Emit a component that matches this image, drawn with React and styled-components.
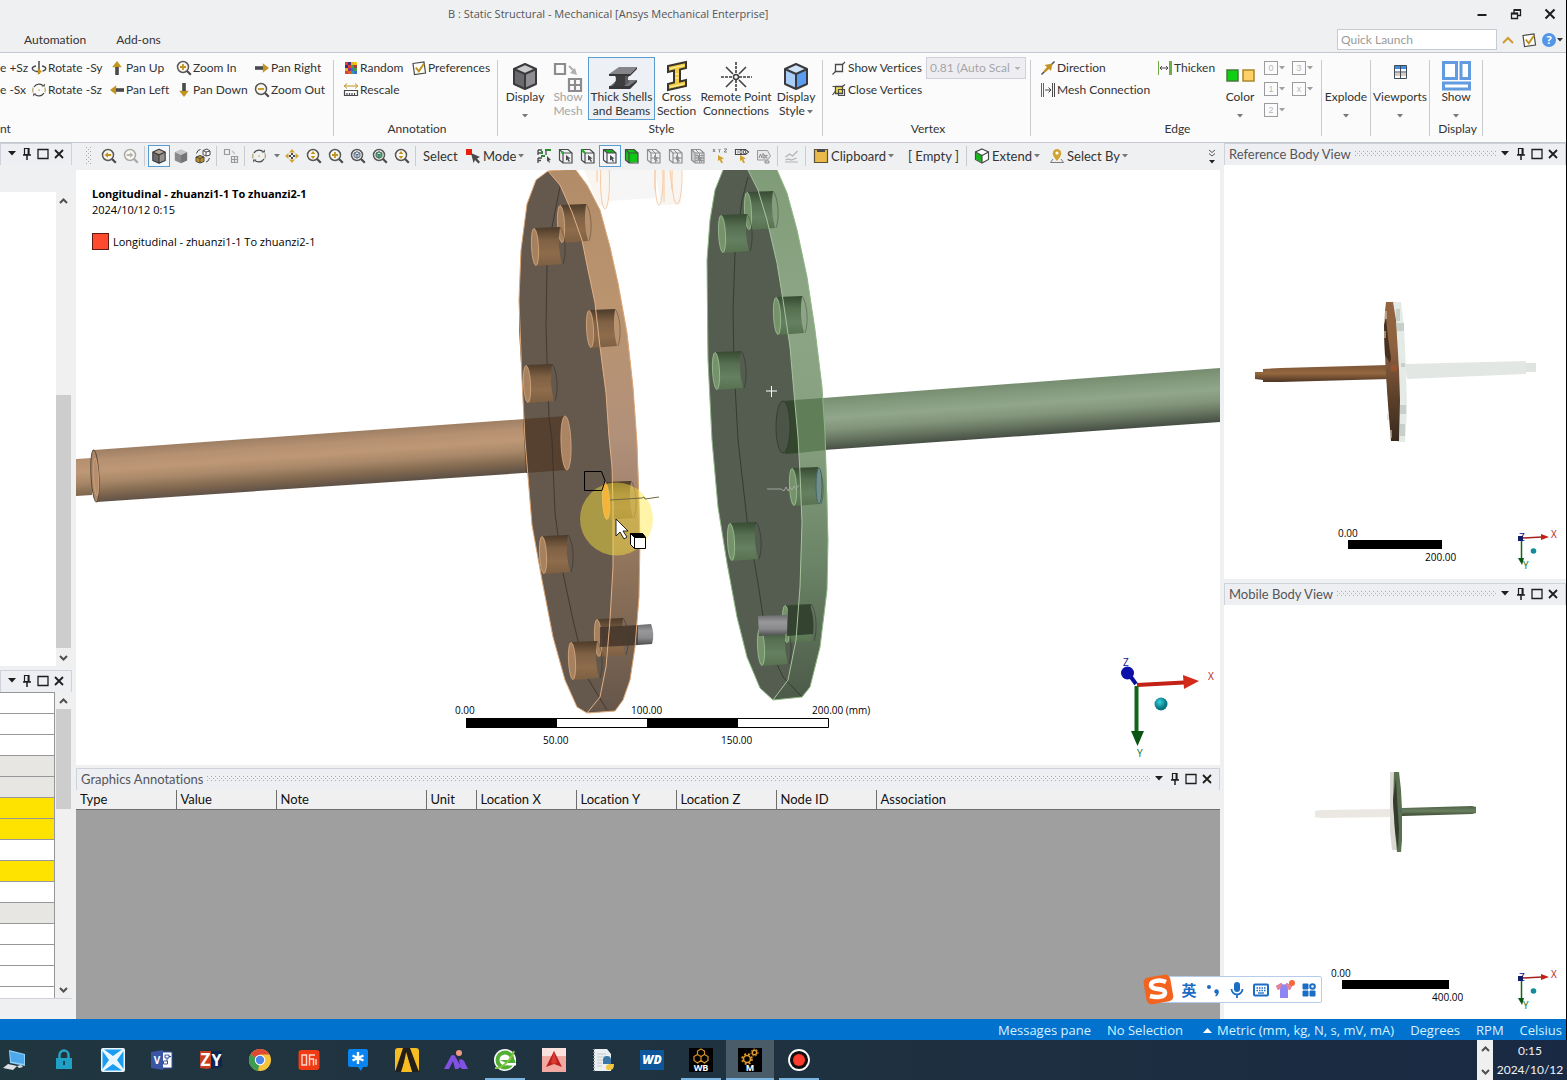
import React from "react";
import styled, { createGlobalStyle } from "styled-components";

const GlobalStyle = createGlobalStyle`
  * {
    box-sizing: border-box;
  }

  body {
    margin: 0;
    background: #eff0f2;
    color: #333;
    font: 12px/14px Lato, "Open Sans", "Noto Sans CJK SC", sans-serif;
    font-variant-ligatures: none;
  }

  button {
    margin: 0;
    padding: 0;
    border: 0;
    background: none;
    color: inherit;
    font: inherit;
    font-variant-ligatures: none;
    white-space: nowrap;
  }

  svg {
    display: block;
    flex: none;
  }
`;

/* ---------- icons ---------- */

const Icon = ({ size = 16, children, box = 16, drop = 0 }) => (
  <svg width={size} height={size} viewBox={`0 ${-drop} ${box} ${box}`} fill="none" overflow="visible" aria-hidden="true">
    {children}
  </svg>
);

const Caret = ({ color = "#777" }) => (
  <svg width="6" height="4" viewBox="0 0 6 4" aria-hidden="true">
    <path d="M0 0h6L3 3.6z" fill={color} />
  </svg>
);

const Chevron = ({ up, color = "#505050" }) => (
  <svg width="9" height="6" viewBox="0 0 9 6" fill="none" aria-hidden="true">
    <path d={up ? "M1 5l3.500-3.500L8 5" : "M1 1l3.500 3.500L8 1"} stroke={color} strokeWidth="2" />
  </svg>
);

const Magnifier = ({ sign, dim }) => (
  <Icon>
    <circle cx="7" cy="7" r="5.500" fill="#fbf7ec" stroke={dim ? "#a9a9a9" : "#58585a"} strokeWidth="1.500" />
    <path d="M11 11l3.800 3.800" stroke={dim ? "#a9a9a9" : "#4a4a4c"} strokeWidth="2.200" />
    {sign === "plus" && <path d="M7 4v6M4 7h6" stroke="#c2941f" strokeWidth="1.800" />}
    {sign === "minus" && <path d="M4 7h6" stroke="#c2941f" strokeWidth="1.800" />}
    {sign === "left" && <path d="M3.500 7L7 4.300v1.700h3.200v2H7v1.700z" fill="#c2941f" />}
    {sign === "right" && <path d="M10.500 7L7 4.300v1.700H3.800v2H7v1.700z" fill="#b5b5b5" />}
    {sign === "updown" && <path d="M7 3l2.300 3H4.700zM7 11l2.300-3H4.700z" fill="#c2941f" />}
    {sign === "cube" && <path d="M7 3.600l3 1.500v3.600l-3 1.600-3-1.600V5.100zM4 5.100l3 1.600 3-1.600M7 6.700v3.500" stroke="#5b6b85" fill="#b9c6da" />}
    {sign === "green" && <path d="M7 3.600l3 1.500v3.600l-3 1.600-3-1.600V5.100zM4 5.100l3 1.600 3-1.600M7 6.700v3.500" stroke="#3f6b55" fill="#58b58a" />}
  </Icon>
);

const Arrow = ({ turn }) => (
  <Icon>
    <g transform={`rotate(${turn} 8 8)`}>
      <path d="M8 1l4.800 6.200H3.200z" fill="#c2941f" />
      <path d="M6.200 7h3.600v8H6.200z" fill="#4a4a4c" />
    </g>
  </Icon>
);

const Cube = ({ size = 32, top, left, right, stroke = "#3a3a3c" }) => (
  <Icon size={size} box={32} drop={size === 32 ? 2 : 0}>
    <path d="M16 4l11 5-11 5L5 9z" fill={top} />
    <path d="M5 9l11 5v15L5 24z" fill={left} />
    <path d="M27 9l-11 5v15l11-5z" fill={right} />
    <path d="M16 4l11 5v15l-11 5-11-5V9zM5 9l11 5 11-5M16 14v15" stroke={stroke} strokeWidth={stroke === "none" ? 0 : 2} strokeLinejoin="round" />
  </Icon>
);

const PickCube = ({ face, line = "#4a4a4c", mesh }) => (
  <Icon>
    {face === "body" && <path d="M2 2l8-1 4 4v9l-9 1-3-3z" fill="#0fc814" />}
    {face === "top" && <path d="M1.500 1.500h8.500l4 3.500H5z" fill="#14b41a" />}
    <path d="M1.500 1.500H10l4 3.500v10H5l-3.500-3zM1.500 1.500L5 5h9M5 5v10" stroke={line} strokeWidth="1.200" />
    {face === "edge" && <path d="M1.500 1.500L5 5" stroke="#14b41a" strokeWidth="2" />}
    {face === "point" && <path d="M3.500 3.500h2.500v2.500H3.500z" fill="#14b41a" />}
    {mesh > 0 && <path d="M9.500 5v10M5 10h9M5.500 1.500L9 5" stroke={line} />}
    {mesh > 1 && <path d="M7 5v10M12 5v10M5 7.500h9M5 12.500h9M3 3v10" stroke={line} strokeWidth=".8" />}
    {face !== "body" && <path d="M8 7l4.500 3.500-2 .3 1.500 2.500-1.200.7-1.400-2.600L8 12.500z" fill={line} />}
  </Icon>
);

const Orbit = () => (
  <Icon>
    <path d="M3 5a5.800 5.800 0 0 1 9.500-.8M13 11a5.800 5.800 0 0 1-9.500.8" stroke="#4a4a4c" strokeWidth="1.300" />
    <path d="M2.200 10.500a6 6 0 0 1 0-5M13.800 5.500a6 6 0 0 1 0 5" stroke="#b8a878" strokeWidth="1.300" />
    <path d="M10.500 4.500h3.500V1.500zM5.500 11.500H2v3z" fill="#6d6858" />
    <path d="M7.400 7.400h1.300v1.300H7.400z" fill="#c2941f" />
  </Icon>
);

const RotateY = () => (
  <Icon>
    <path d="M8 1v13" stroke="#4a4a4c" strokeWidth="1.500" />
    <path d="M5 6C0 7 0 10 5 11.500h2M11 6c5 1 5 4 .5 5.200" stroke="#4a4a4c" strokeWidth="1.300" />
    <path d="M11 11.500L6.800 8v7z" fill="#c2941f" />
  </Icon>
);

const CheckNote = () => (
  <Icon>
    <path d="M2 3.500L13 2l1.500 11L3.500 14.500z" fill="#fff" stroke="#4a4a4c" strokeWidth="1.200" />
    <path d="M4.800 7.500l3 3.800L13 3.500" stroke="#c2941f" strokeWidth="2" />
  </Icon>
);

const gridColors = ["#e0422c", "#4a2f7c", "#e8b21e", "#f5c518", "#3a2a86", "#e0422c", "#41a048", "#a43b32", "#e8b21e", "#8c2d8c", "#3670c8", "#41a048", "#e0422c", "#d8632a", "#2f9ba3", "#3670c8"];

const ColorGrid = () => (
  <Icon>
    {gridColors.map((c, i) => (
      <rect key={i} x={2 + (i % 4) * 3} y={2 + Math.floor(i / 4) * 3} width="3" height="3" fill={c} />
    ))}
  </Icon>
);

const RescaleIcon = () => (
  <Icon>
    <path d="M1 4h14M4 1.500L1.200 4 4 6.500M12 1.500L14.800 4 12 6.500" stroke="#c2941f" />
    <path d="M1.500 8.500h13v5h-13zM4 13v-2M6.500 13v-2M9 13v-2M11.500 13v-2" stroke="#4a4a4c" strokeWidth="1.200" />
  </Icon>
);

const ShowMeshIcon = () => (
  <Icon size={32} box={32} drop={2}>
    <path d="M3 4h10v10H3z" stroke="#8c8c8e" strokeWidth="2.200" />
    <path d="M17 6l5 5" stroke="#b0b0b0" strokeWidth="2" />
    <path d="M25 15l-7-2 5-5z" fill="#b0b0b0" />
    <path d="M17 19h12v12H17zM23 19v12M17 25h12" stroke="#8c8c8e" strokeWidth="2.200" />
  </Icon>
);

const BeamIcon = () => (
  <Icon size={32} box={32}>
    <path d="M11 22h20l-8 7H3z" fill="#77777c" />
    <path d="M9 17h15q-4 3-1 7l-5 4H6q6-4 3-11z" fill="#3d3d40" />
    <path d="M19 17h5q-4 3-1 7l-4 3z" fill="#5a5a5f" />
    <path d="M13 9h18l-7 7H3z" fill="#85858a" />
    <path d="M3 16h21l7-7v2l-7 7H3zM3 28h20l8-6v2l-7 7H3z" fill="#38383b" />
  </Icon>
);

const SectionIcon = () => (
  <Icon size={32} box={32}>
    <path d="M7 8l18-4v6l-6 1.500v12L25 22v6L7 32v-6l6-1.500v-12L7 14z" fill="#f2cd41" stroke="#38352c" strokeWidth="2" />
    <path d="M9 10.500l14-3M9 29l14-3M14 16h4M14 20h4" stroke="#fff2b4" strokeWidth="1" />
  </Icon>
);

const RemoteIcon = () => (
  <Icon size={32} box={32} drop={2}>
    <circle cx="16" cy="17" r="2.500" stroke="#3f3f41" strokeWidth="1.500" />
    <path d="M16 2v12M16 20v12M1 17h12M19 17h13" stroke="#3f3f41" strokeWidth="1.600" strokeDasharray="3 1" />
    <path d="M6 7l7 7M26 7l-7 7M6 27l7-7M26 27l-7-7" stroke="#3f3f41" strokeWidth="1.500" />
  </Icon>
);

const VertexIcon = ({ fill = "none" }) => (
  <Icon>
    <path d="M4.500 4.500h7v7h-7z" fill={fill} stroke="#4a4a4c" strokeWidth="1.300" />
    {fill === "none" ? (
      <path d="M1.500 14.500l3-3M11.500 4.500l2.500-2.500" stroke="#4a4a4c" strokeWidth="1.200" />
    ) : (
      <path d="M7.500 7.500h6v6h-6zM1.500 4.500h3M1.500 13l3-4M11.500 4.500L14 2.500" stroke="#4a4a4c" strokeWidth="1.200" />
    )}
  </Icon>
);

const DirectionIcon = () => (
  <Icon>
    <path d="M1.500 14.500l13-13" stroke="#4a4a4c" strokeWidth="1.500" />
    <path d="M12.500 3.500L11 11 9 9l-4 3.500-1.500-1.500L7 7 4.500 5z" fill="#c2941f" />
  </Icon>
);

const ConnectionIcon = () => (
  <Icon>
    <path d="M1.500 1v14M3.500 1v14" stroke="#d0382c" />
    <path d="M12.500 1v14M14.500 1v14M5 8h6M8.500 5.500L11 8l-2.500 2.500" stroke="#4a4a4c" />
  </Icon>
);

const ThickenIcon = () => (
  <Icon>
    <path d="M1.500 1v14" stroke="#6fae45" />
    <path d="M13.500 1v14" stroke="#6fae45" strokeWidth="3" />
    <path d="M3 8h8M5 6L3 8l2 2M9 6l2 2-2 2" stroke="#4a4a4c" />
  </Icon>
);

const SwatchIcon = () => (
  <Icon size={32} box={32}>
    <path d="M3 12h11v11H3z" fill="#0fcf14" stroke="#4a7a3c" strokeWidth="1.500" />
    <path d="M19 12h11v11H19z" fill="#fdd163" stroke="#a8862c" strokeWidth="1.500" />
  </Icon>
);

const ViewportIcon = () => (
  <Icon size={32} box={32}>
    <path d="M10 8h12v3H10z" fill="#3e8fe0" />
    <path d="M10 15h12v3H10z" fill="#d8cdbb" />
    <path d="M10.500 7.500h12v13h-12zM16.500 7v13M10 14h13" stroke="#3f4a58" />
  </Icon>
);

const ShowIcon = () => (
  <Icon size={32} box={32} drop={1}>
    <path d="M3.500 3.500h13v16h-13zM21 3.500h8.500v16H21zM3.500 24h26v6h-26z" fill="#fff" stroke="#639be0" strokeWidth="3" />
  </Icon>
);

const SwapCubes = () => (
  <Icon>
    <path d="M8 2.500L12 1l3 2v4l-4 1-3-1.500z" fill="#fff" stroke="#4a4a4c" />
    <path d="M8 2.500l3 1.500 4-1M11 4v4" stroke="#4a4a4c" />
    <path d="M1 9l4-1.500L9 9v4.500L5 15l-4-1.500z" fill="#c2941f" stroke="#4a4a4c" />
    <path d="M1 9l4 1.500L9 9M5 10.500V15M1.500 5.500L3 2.500l2.500-1M14.500 10L13 13l-2 1" stroke="#4a4a4c" />
  </Icon>
);

const ShowMeshSmall = () => (
  <Icon>
    <path d="M1.500 1.500h5v5h-5zM8.500 8.500h6v6h-6zM11.500 8.500v6M8.500 11.500h6" stroke="#9a9a9c" strokeWidth="1.200" />
    <path d="M9 3l3 3" stroke="#c2c2c2" strokeWidth="1.200" />
  </Icon>
);

const PanIcon = () => (
  <Icon>
    <path d="M8 1l3 3.500H5zM8 15l3-3.500H5zM1 8l3.500-3v6zM15 8l-3.500-3v6z" fill="#d1a330" />
    <path d="M7 5h2v2H7zM7 9h2v2H7zM5 7h2v2H5zM9 7h2v2H9z" fill="#4a4a4c" />
  </Icon>
);

const ModeIcon = () => (
  <Icon>
    <path d="M1 1h6v6H1z" fill="#e5200d" />
    <path d="M6 5l9 4-3 1.500L15 14l-1.500 1.500L10 12l-1.500 3z" fill="#4a4a4c" />
  </Icon>
);

const FiltersIcon = () => (
  <Icon>
    <path d="M2 2v5M2 2h4M2 5h3M2 10v5M2 10h4M2 12.500h3M10 2v5" stroke="#4a4a4c" strokeWidth="1.300" />
    <path d="M9 1h6v2H9zM5 7h4v2H5zM5 3h2v3H5z" fill="#2b8a30" />
    <path d="M11 8l4 4-2 .2 1 2-1 .5-1-2-1 1z" fill="#4a4a4c" />
  </Icon>
);

const Cursor = () => <path d="M6 7l6 3.500-2.500.8L11 15H9l-1.200-3L6 13z" fill="#d1a330" />;

const XyzIcon = () => (
  <Icon>
    <path d="M1 1l2 3M3 1L1 4M6.500 1l1 1.500v2M8.500 1l-1 1.500M12 1h3l-3 3h3" stroke="#7a7a7c" strokeWidth=".9" />
    <Cursor />
  </Icon>
);

const TagIcon = () => (
  <Icon>
    <path d="M1.500 1.500h10l3 2.500-3 2.500h-10z" fill="#fff" stroke="#4a4a4c" strokeWidth="1.200" />
    <path d="M4 2.500v3M6 2.500h2v3H6zM9.500 2.500h2v3h-2z" stroke="#4a4a4c" strokeWidth=".8" />
    <Cursor />
  </Icon>
);

const AbcIcon = () => (
  <Icon>
    <path d="M1.500 2.500h10l3 5.500-3 4h-10z" fill="#e8e8ea" stroke="#9a9a9c" />
    <path d="M3 10l1.500-4L6 10M7 5v5h2V7H7M11.500 7.500H10V10h1.500M9 13h4v2H9z" stroke="#8a8a8c" />
  </Icon>
);

const ChartIcon = () => (
  <Icon>
    <path d="M1.500 9l4-3 3 2 5-5M1 14h13M1.500 12l3-1 3 1 5-2" stroke="#b2b2b4" strokeWidth="1.200" />
  </Icon>
);

const ClipboardIcon = () => (
  <Icon>
    <path d="M1.500 1.500h13v13h-13z" fill="#e9b94a" stroke="#5c5138" strokeWidth="1.200" />
    <path d="M4 1h8v3H4z" fill="#4a4a4c" />
  </Icon>
);

const ExtendIcon = () => (
  <Icon>
    <path d="M8 1l6.500 3v7.500L8 15l-6.500-3.500V4z" fill="#fff" stroke="#4a4a4c" strokeWidth="1.200" />
    <path d="M2 4.800l6 3v6.700l-6-3.200z" fill="#14b41a" />
    <path d="M1.500 4L8 7.500 14.500 4M8 7.500V15" stroke="#4a4a4c" strokeWidth="1.200" />
  </Icon>
);

const PlaceIcon = () => (
  <Icon>
    <path d="M8 13C5 9 3.800 7.400 3.800 5.200a4.200 4.200 0 0 1 8.400 0C12.200 7.400 11 9 8 13z" fill="#d1a330" />
    <circle cx="8" cy="5" r="1.600" fill="#fff" />
    <path d="M4 11l-2.500 3.500h13L12 11" stroke="#7a7a7c" />
  </Icon>
);

const PinIcon = () => (
  <Icon>
    <path d="M5.500 2.500h4.500v6H5.500z" stroke="#1e1e1e" strokeWidth="1.200" />
    <path d="M9.300 2v7M4 9h8M8 9v5" stroke="#1e1e1e" strokeWidth="1.500" />
  </Icon>
);

const SquareIcon = () => (
  <Icon>
    <path d="M3 3.500h10v9H3z" stroke="#1e1e1e" strokeWidth="1.300" />
  </Icon>
);

const CrossIcon = () => (
  <Icon>
    <path d="M4 4l8 8M12 4l-8 8" stroke="#1e1e1e" strokeWidth="1.800" />
  </Icon>
);

/* ---------- window frame ---------- */

const Window = styled.div`
  display: flex;
  flex-direction: column;
  min-height: 100vh;
`;

const AppFrame = styled.div`
  flex: 1;
  display: flex;
  flex-direction: column;
  border-right: 1px solid #000;
`;

const TitleBar = styled.header`
  display: flex;
  align-items: center;
  height: 28px;
  padding: 0 8px 0 448px;
  color: #555;
`;

const Title = styled.h1`
  flex: 1;
  margin: 0;
  font-family: "Open Sans", sans-serif;
  font-size: 11px;
  font-weight: 400;
`;

const WindowButton = styled.button`
  display: flex;
  justify-content: center;
  width: 34px;

  &:last-child {
    width: 16px;
    margin-left: 9px;
  }
`;

const TabRow = styled.nav`
  display: flex;
  align-items: center;
  height: 25px;
  padding: 0 3px 1px 9px;
  border-bottom: 1px solid #c4c7cd;
`;

const Tab = styled.button`
  padding: 0 15px;
`;

const TabSpacer = styled.div`
  flex: 1;
`;

const QuickLaunch = styled.input`
  width: 160px;
  height: 21px;
  padding: 0 3px;
  border: 1px solid #c6cad2;
  background: #fff;
  font: inherit;

  &::placeholder {
    color: #9a9a9a;
  }
`;

const TinyButton = styled.button`
  display: flex;
  align-items: center;
  justify-content: center;
  min-width: 21px;

  &:last-child {
    justify-content: flex-end;
    min-width: 24px;
  }
`;

/* ---------- ribbon ---------- */

const RibbonBar = styled.div`
  display: flex;
  height: 90px;
  padding-top: 4px;
  border-bottom: 1px solid #c4c7cd;
  background: #fbfbfc;
`;

const Group = styled.section`
  display: flex;
  flex-direction: column;
  flex: none;
  width: ${(props) => props.$width}px;
`;

const GroupBody = styled.div`
  flex: 1;
  display: flex;
  align-items: flex-start;
  justify-content: ${(props) => (props.$center ? "center" : "flex-start")};
  padding-left: ${(props) => props.$pad || 0}px;
`;

const GroupLabel = styled.div`
  height: 20px;
  padding-left: ${(props) => (props.$align ? 0 : 3)}px;
  text-align: ${(props) => props.$align || "center"};
`;

const Divider = styled.div`
  width: 1px;
  margin: 3px 0 6px;
  background: #c9cbd0;
`;

const Stack = styled.div`
  display: flex;
  flex-direction: column;
  align-items: flex-start;
  flex: none;
  width: ${(props) => props.$width}px;
`;

const SmallButton = styled.button`
  display: flex;
  align-items: center;
  gap: 1px;
  height: 22px;
`;

const LargeButton = styled.button`
  display: flex;
  flex-direction: column;
  align-items: center;
  flex: none;
  width: ${(props) => props.$width}px;
  height: 63px;
  border: 1px solid ${(props) => (props.$active ? "#5a9bd0" : "transparent")};
  background: ${(props) => (props.$active ? "#edf0f5" : "none")};
  color: ${(props) => (props.disabled ? "#a5a5a5" : "inherit")};

  > svg:last-child {
    margin-top: 10px;
  }
`;

const InlineCaret = styled.span`
  display: inline-block;
  margin-left: 2px;
  vertical-align: middle;
`;

const ScaleSelect = styled.select`
  appearance: none;
  width: 100px;
  height: 22px;
  padding: 0 3px;
  border: 1px solid #cfd1da;
  border-radius: 0;
  background:
    linear-gradient(45deg, transparent 50%, #b4b4b8 50%) no-repeat right 8px top 9px / 3px 3px,
    linear-gradient(-45deg, transparent 50%, #b4b4b8 50%) no-repeat right 5px top 9px / 3px 3px,
    #eeeef2;
  color: #a5a5a8;
  font: inherit;
  opacity: 1;
`;

const EdgeGrid = styled.div`
  display: grid;
  grid-template-columns: 28px 28px;
  grid-auto-rows: 21px;
  align-items: center;
  padding-left: 3px;
`;

const EdgeButton = styled.button`
  display: flex;
  align-items: center;
  gap: 1px;
  grid-column: ${(props) => props.$col};
  grid-row: ${(props) => props.$row};
`;

const EdgeDigit = styled.span`
  width: 14px;
  height: 14px;
  border: 1px solid #9c9c9e;
  color: #b8b8b8;
  font: 9px/12px "Liberation Sans", sans-serif;
  text-align: center;
`;

const Large = ({ icon, lines, width, active, disabled, caret, menu }) => (
  <LargeButton $width={width} $active={active} disabled={disabled}>
    {icon}
    {lines.map((line, i) => (
      <span key={line}>
        {line}
        {caret && i === lines.length - 1 && (
          <InlineCaret>
            <Caret />
          </InlineCaret>
        )}
      </span>
    ))}
    {menu && <Caret />}
  </LargeButton>
);

const RibbonGroup = ({ width, pad, label, center, align, children }) => (
  <>
    <Group $width={width}>
      <GroupBody $pad={pad} $center={center}>
        {children}
      </GroupBody>
      <GroupLabel $align={align}>{label}</GroupLabel>
    </Group>
    <Divider />
  </>
);

const Column = ({ width, items }) => (
  <Stack $width={width}>
    {items.map(([icon, label]) => (
      <SmallButton key={label}>
        {icon}
        {label}
      </SmallButton>
    ))}
  </Stack>
);

const edgeItems = [
  ["0", 1, 1],
  ["3", 2, 1],
  ["1", 1, 2],
  ["x", 2, 2],
  ["2", 1, 3],
];

const Ribbon = () => (
  <RibbonBar>
    <RibbonGroup width={333} label="nt" align="left">
      <Column width={31} items={[[null, "e +Sz"], [null, "e -Sx"]]} />
      <Column width={78} items={[[<RotateY />, "Rotate -Sy"], [<Orbit />, "Rotate -Sz"]]} />
      <Column width={67} items={[[<Arrow turn={0} />, "Pan Up"], [<Arrow turn={-90} />, "Pan Left"]]} />
      <Column width={78} items={[[<Magnifier sign="plus" />, "Zoom In"], [<Arrow turn={180} />, "Pan Down"]]} />
      <Column width={78} items={[[<Arrow turn={90} />, "Pan Right"], [<Magnifier sign="minus" />, "Zoom Out"]]} />
    </RibbonGroup>
    <RibbonGroup width={163} pad={9} label="Annotation">
      <Column width={68} items={[[<ColorGrid />, "Random"], [<RescaleIcon />, "Rescale"]]} />
      <Column width={84} items={[[<CheckNote />, "Preferences"]]} />
    </RibbonGroup>
    <RibbonGroup width={324} pad={4} label="Style">
      <Large width={46} icon={<Cube top="#c9c9cb" left="#6a6a6e" right="#8f8f93" />} lines={["Display"]} menu />
      <Large width={40} icon={<ShowMeshIcon />} lines={["Show", "Mesh"]} disabled />
      <Large width={67} icon={<BeamIcon />} lines={["Thick Shells", "and Beams"]} active />
      <Large width={43} icon={<SectionIcon />} lines={["Cross", "Section"]} />
      <Large width={76} icon={<RemoteIcon />} lines={["Remote Point", "Connections"]} />
      <Large width={44} icon={<Cube top="#cfe3fb" left="#a9cdf8" right="#5b9df0" />} lines={["Display", "Style"]} caret />
    </RibbonGroup>
    <RibbonGroup width={207} pad={8} label="Vertex">
      <Column width={95} items={[[<VertexIcon />, "Show Vertices"], [<VertexIcon fill="#f4e04a" />, "Close Vertices"]]} />
      <ScaleSelect disabled aria-label="Vertex scale">
        <option>0.81 (Auto Scal</option>
      </ScaleSelect>
    </RibbonGroup>
    <RibbonGroup width={290} pad={9} label="Edge">
      <Column width={117} items={[[<DirectionIcon />, "Direction"], [<ConnectionIcon />, "Mesh Connection"]]} />
      <Column width={62} items={[[<ThickenIcon />, "Thicken"]]} />
      <Large width={42} icon={<SwatchIcon />} lines={["Color"]} menu />
      <EdgeGrid>
        {edgeItems.map(([digit, col, row]) => (
          <EdgeButton key={digit} $col={col} $row={row}>
            <EdgeDigit>{digit}</EdgeDigit>
            <Caret color="#a0a0a2" />
          </EdgeButton>
        ))}
      </EdgeGrid>
    </RibbonGroup>
    <RibbonGroup width={48} center>
      <Large width={46} icon={<Icon size={32} />} lines={["Explode"]} menu />
    </RibbonGroup>
    <RibbonGroup width={58} center>
      <Large width={56} icon={<ViewportIcon />} lines={["Viewports"]} menu />
    </RibbonGroup>
    <RibbonGroup width={52} center label="Display">
      <Large width={44} icon={<ShowIcon />} lines={["Show"]} menu />
    </RibbonGroup>
  </RibbonBar>
);

/* ---------- graphics toolbar ---------- */

const ToolStrip = styled.div`
  display: flex;
  align-items: center;
  flex: none;
  height: 27px;
  padding: 0 0 1px 10px;
  font-size: 13px;
`;

const Grip = styled.div`
  width: 6px;
  height: 18px;
  margin-right: 6px;
  background:
    conic-gradient(at 1px 1px, transparent 75%, #a5a8ae 0) 0 0 / 4px 4px,
    conic-gradient(at 1px 1px, transparent 75%, #a5a8ae 0) 2px 2px / 4px 4px;
`;

const ToolButton = styled.button`
  display: flex;
  align-items: center;
  justify-content: center;
  flex: none;
  width: 22px;
  height: 22px;
  border: 1px solid ${(props) => (props.$active ? "#5a9bd0" : "transparent")};
  background: ${(props) => (props.$active ? "#f4f8fd" : "none")};
`;

const ToolSeparator = styled.div`
  flex: none;
  width: 1px;
  height: 20px;
  margin: 0 3px 0 2px;
  background: #c9cbd0;
`;

const MenuButton = styled.button`
  display: flex;
  align-items: center;
  gap: 2px;
  flex: none;
  width: ${(props) => props.$width}px;
  padding-left: 4px;
`;

const Overflow = styled.button`
  display: flex;
  flex-direction: column;
  align-items: center;
  gap: 3px;
  margin-left: auto;
  padding-right: 5px;
`;

const Tools = ({ items }) =>
  items.map(([name, icon, active]) => (
    <ToolButton key={name} aria-label={name} $active={active}>
      {icon}
    </ToolButton>
  ));

const GraphicsToolbar = () => (
  <ToolStrip>
    <Grip />
    <Tools items={[["Previous view", <Magnifier sign="left" />], ["Next view", <Magnifier sign="right" dim />]]} />
    <ToolSeparator />
    <Tools
      items={[
        ["Shaded with edges", <Cube size={18} top="#b9a597" left="#6f6a68" right="#94908e" />, true],
        ["Shaded", <Cube size={18} top="#c6c6c8" left="#8a8a8c" right="#757577" stroke="none" />],
        ["Swap bodies", <SwapCubes />],
      ]}
    />
    <ToolSeparator />
    <Tools items={[["Show mesh", <ShowMeshSmall />]]} />
    <ToolSeparator />
    <Tools items={[["Rotate", <Orbit />]]} />
    <MenuButton $width={11} aria-label="Rotate options">
      <Caret />
    </MenuButton>
    <Tools
      items={[
        ["Pan", <PanIcon />],
        ["Zoom", <Magnifier sign="updown" />],
        ["Box zoom", <Magnifier sign="plus" />],
        ["Zoom to fit", <Magnifier sign="cube" />],
        ["Zoom to selection", <Magnifier sign="green" />],
        ["Magnifier", <Magnifier sign="updown" />],
      ]}
    />
    <ToolSeparator />
    <MenuButton $width={42}>Select</MenuButton>
    <MenuButton $width={72}>
      <ModeIcon />
      Mode
      <Caret />
    </MenuButton>
    <Tools
      items={[
        ["Filters", <FiltersIcon />],
        ["Vertex", <PickCube face="point" />],
        ["Edge", <PickCube face="edge" />],
        ["Face", <PickCube face="top" />, true],
        ["Body", <PickCube face="body" />],
        ["Node", <PickCube line="#8f8f91" mesh={1} />],
        ["Element face", <PickCube line="#8f8f91" mesh={1} />],
        ["Element", <PickCube line="#8f8f91" mesh={2} />],
        ["Coordinates", <XyzIcon />],
        ["Probe", <TagIcon />],
        ["Label", <AbcIcon />],
      ]}
    />
    <ToolSeparator />
    <Tools items={[["Chart", <ChartIcon />]]} />
    <ToolSeparator />
    <MenuButton $width={95}>
      <ClipboardIcon />
      Clipboard
      <Caret />
    </MenuButton>
    <MenuButton $width={60}>[ Empty ]</MenuButton>
    <ToolSeparator />
    <MenuButton $width={75}>
      <ExtendIcon />
      Extend
      <Caret />
    </MenuButton>
    <MenuButton $width={84}>
      <PlaceIcon />
      Select By
      <Caret />
    </MenuButton>
    <Overflow aria-label="More tools">
      <svg width="6" height="8" viewBox="0 0 6 8" fill="none">
        <path d="M0 1l3 2.500L6 1M0 4.500L3 7l3-2.500" stroke="#555" />
      </svg>
      <Caret color="#222" />
    </Overflow>
  </ToolStrip>
);

/* ---------- dock panels ---------- */

const Workspace = styled.main`
  flex: 1;
  display: flex;
  gap: 4px;
`;

const LeftDock = styled.aside`
  display: flex;
  flex-direction: column;
  flex: none;
  width: 72px;
`;

const Center = styled.div`
  flex: 1;
  min-width: 0;
  display: flex;
  flex-direction: column;
`;

const RightDock = styled.aside`
  display: flex;
  flex-direction: column;
  flex: none;
  width: 342px;
  gap: 4px;
`;

const PanelBar = styled.div`
  display: flex;
  align-items: center;
  flex: none;
  height: 22px;
  padding: 0 4px 2px;
  border: solid #cfd2da;
  border-width: 1px 1px 0;
  background: #eeeff2;
  color: #54565a;
`;

const PanelTitle = styled.h2`
  margin: 0 4px 0 0;
  font-size: 13px;
  font-weight: 400;
  white-space: nowrap;
`;

const Dots = styled.div`
  flex: 1;
  height: 6px;
  background:
    conic-gradient(at 1px 1px, transparent 75%, #a9abb0 0) 0 0 / 4px 4px,
    conic-gradient(at 1px 1px, transparent 75%, #a9abb0 0) 2px 2px / 4px 4px;
`;

const PanelButton = styled.button`
  display: flex;
  align-items: center;
  justify-content: center;
  width: 16px;
`;

const PanelHeader = ({ title }) => (
  <PanelBar>
    {title && <PanelTitle>{title}</PanelTitle>}
    <Dots />
    <PanelButton aria-label="Panel menu">
      <svg width="8" height="5" viewBox="0 0 8 5">
        <path d="M0 0h8L4 4.500z" fill="#1e1e1e" />
      </svg>
    </PanelButton>
    <PanelButton aria-label="Pin panel">
      <PinIcon />
    </PanelButton>
    <PanelButton aria-label="Maximize panel">
      <SquareIcon />
    </PanelButton>
    <PanelButton aria-label="Close panel">
      <CrossIcon />
    </PanelButton>
  </PanelBar>
);

const OutlineArea = styled.div`
  flex: 474;
  display: flex;
  justify-content: flex-end;
  margin: 27px 0 4px;
  padding-right: 1px;
  background: linear-gradient(#fff, #fff) no-repeat 0 0 / 56px 100%;
`;

const DetailsArea = styled.div`
  flex: 306;
  display: flex;
  margin-bottom: 20px;
  padding-right: 1px;
  border-bottom: 1px solid #cfd2da;
`;

const DetailRows = styled.div`
  flex: 1;
  height: 306px;
  margin-right: 1px;
  overflow: hidden;
  border-right: 1px solid #97979a;
`;

const rowColors = { white: "#fff", grey: "#e8e6e3", yellow: "#ffe300" };

const DetailRow = styled.div`
  height: 21px;
  border-top: 1px solid #97979a;
  background: ${(props) => rowColors[props.$tone]};
`;

const ScrollTrack = styled.div`
  display: flex;
  flex-direction: column;
  flex: none;
  width: 15px;
  background: #f0f0f1;
`;

const ScrollArrow = styled.button`
  display: flex;
  align-items: center;
  justify-content: center;
  height: 17px;
`;

const ScrollRun = styled.div`
  flex: 1;
  display: flex;
  flex-direction: column;
`;

const ScrollThumb = styled.div`
  flex: ${(props) => props.$size};
  background: #cdcdcd;
`;

const ScrollGap = styled.div`
  flex: ${(props) => props.$size};
`;

const ScrollBar = ({ before, size, after }) => (
  <ScrollTrack>
    <ScrollArrow aria-label="Scroll up">
      <Chevron up />
    </ScrollArrow>
    <ScrollRun>
      <ScrollGap $size={before} />
      <ScrollThumb $size={size} />
      <ScrollGap $size={after} />
    </ScrollRun>
    <ScrollArrow aria-label="Scroll down">
      <Chevron />
    </ScrollArrow>
  </ScrollTrack>
);

const detailTones = ["white", "white", "white", "grey", "grey", "yellow", "yellow", "white", "yellow", "white", "grey", "white", "white", "white", "white"];

const DockSection = styled.section`
  flex: 1 1 0;
  min-height: 0;
  display: flex;
  flex-direction: column;
`;

/* ---------- 3D views ---------- */

const Viewport = styled.div`
  position: relative;
  flex: ${(props) => props.$grow || 1} 1 0;
  min-height: 0;
  background: #fff;

  > svg {
    width: 100%;
    height: 100%;
  }

  text {
    font-family: "Open Sans", sans-serif;
    font-size: 10px;
  }
`;

const Legend = styled.div`
  position: absolute;
  top: 17px;
  left: 16px;
  display: flex;
  flex-direction: column;
  gap: 2px;
  color: #000;
  font: 11px/14px "Open Sans", sans-serif;
`;

const LegendKey = styled.div`
  display: flex;
  align-items: center;
  gap: 4px;
  margin-top: 14px;

  &::before {
    content: "";
    flex: none;
    box-sizing: border-box;
    width: 17px;
    height: 17px;
    border: 1px solid #5c1c14;
    background: #ff4a30;
  }
`;

const boreTones = {
  brown: { end: "#a5815f", line: "#d9ab80" },
  green: { end: "#75926b", line: "#9fc096" },
};

// One bored hole: shaded barrel, hidden back edge, lit rim on the left.
const Bore = ({ x, y, tone, lit }) => (
  <g>
    <path d={`M${x + 4} ${y}l25-1q-3 19 2 37l-26 2z`} fill={`url(#bore-${tone})`} />
    <path d={`M${x + 29} ${y - 1}c5 6 7 26 3 37`} stroke="#000" strokeOpacity=".35" fill="none" strokeWidth=".8" />
    <ellipse cx={x + 4} cy={y + 19} rx="3.500" ry="18.500" transform={`rotate(-3 ${x + 4} ${y + 19})`} fill={lit || boreTones[tone].end} stroke={boreTones[tone].line} strokeWidth=".8" />
  </g>
);

const brownBores = [
  [557, 205],
  [531, 228],
  [586, 310],
  [523, 365],
  [539, 536],
  [594, 619],
  [568, 642],
];

const greenBores = [
  [744, 192],
  [718, 215],
  [773, 297],
  [712, 352],
  [789, 468],
  [727, 523],
  [782, 605],
  [757, 628],
];

const Gradient = ({ id, stops }) => (
  <linearGradient id={id} x1="0" y1="0" x2="0" y2="1">
    {stops.map((color, i) => (
      <stop key={i} offset={i / (stops.length - 1)} stopColor={color} />
    ))}
  </linearGradient>
);

// Shading runs across a long shaft, so its gradient is tilted with the axis.
const ShaftGradient = ({ id, from, to, stops }) => (
  <linearGradient id={id} gradientUnits="userSpaceOnUse" x1={from[0]} y1={from[1]} x2={to[0]} y2={to[1]}>
    {stops.map((color, i) => (
      <stop key={i} offset={i / (stops.length - 1)} stopColor={color} />
    ))}
  </linearGradient>
);

const MainScene = () => (
  <svg viewBox="76 170 1144 595" role="img" aria-label="Two flanged shafts">
    <defs>
      <ShaftGradient id="shaft-brown" from={[300, 434]} to={[304, 489]} stops={["#9c7d62", "#b59071", "#be9876", "#a88768", "#82694f", "#5b4e46"]} />
      <ShaftGradient id="shaft-green" from={[1020, 382]} to={[1024, 437]} stops={["#768c70", "#849b7d", "#91a68b", "#83967c", "#65735f", "#434a41"]} />
      <Gradient id="rim-brown" stops={["#b28b68", "#ba946f", "#b1907a", "#8d7159", "#65564a"]} />
      <Gradient id="rim-green" stops={["#809b77", "#8ca685", "#87a180", "#6a8265", "#4c5a49"]} />
      <Gradient id="bore-brown" stops={["#4c3a29", "#7f6144", "#8e6c4c", "#7d5f42"]} />
      <Gradient id="bore-green" stops={["#374a33", "#567051", "#648060", "#58724f"]} />
      <Gradient id="pin" stops={["#6c6c6e", "#98989a", "#8a8a8c", "#4c4c4e"]} />
      <radialGradient id="ball" cx=".4" cy=".35">
        <stop offset="0" stopColor="#32d4de" />
        <stop offset="1" stopColor="#0a7480" />
      </radialGradient>
    </defs>

    <path d="M584 170h25q0 30-3 38l-8-4zM655 170h26v34l-20 1z" fill="#f9f5f0" />
    <path d="M609 170h46v28l-46 3z" fill="#f6f6f6" />
    <g fill="none" stroke="#f6cba6">
      <ellipse cx="605" cy="180" rx="4.500" ry="29" />
      <ellipse cx="659" cy="178" rx="4" ry="27" />
      <ellipse cx="677" cy="177" rx="5" ry="27" />
      <path d="M597 170v12M655 170v20M664 170v32M670 170l2 20" />
    </g>

    <path d="M76 459l16-1v37l-16 1z" fill="url(#shaft-brown)" />
    <path d="M94 450l472-34q8 22 1 54l-470 32q-8-24-3-52z" fill="url(#shaft-brown)" />
    <ellipse cx="95" cy="476" rx="4" ry="26" transform="rotate(-3 95 476)" fill="#ab8667" stroke="#5a4a3c" />
    <ellipse cx="96" cy="477" rx="2.500" ry="19" transform="rotate(-3 96 477)" fill="#b48d6d" stroke="#cfa27b" strokeWidth=".8" />

    <path d="M548 171L575 169 587 185 600 210 610 247 618 283 627 333 633 387 637 443 639 490 640 540 639 597 635 647 630 680 623 700 615 711 587 713z" fill="url(#rim-brown)" />
    <path d="M548 171L536 180 527 204 521 250 519 300 519 330 522 380 525 440 532 525 542 580 553 637 565 680 577 707 587 713 600 697 606 667 610 620 613 567 613 507 612 467 609 437 606 393 600 347 595 303 588 270 582 240 572 212 560 185z" fill="#65594d" />
    <path d="M523 419l43-3q8 20 1 54l-41 3z" fill="#564131" />
    <ellipse cx="566" cy="443" rx="5" ry="27" transform="rotate(-2 566 443)" fill="#ab8464" stroke="#d7a981" strokeWidth=".8" />
    <path d="M560 187L552 227 547 267 546 327 547 360 549 417 552 440 555 513 563 573 573 620 587 677 607 710" fill="none" stroke="#37302a" strokeWidth=".8" />
    {brownBores.map(([x, y]) => (
      <Bore key={`${x}-${y}`} x={x} y={y} tone="brown" />
    ))}
    <Bore x={602} y={482} tone="brown" lit="#ed8b35" />
    <path d="M600 627l39-2v20l-39 2z" fill="#46372c" opacity=".9" />
    <path d="M638 625l13-1q4 10 1 20l-14 1z" fill="url(#pin)" />
    <path d="M587 713L577 707 565 680 553 637 542 580 532 525 525 440 522 380 519 300 521 250 527 204 536 180 548 171 575 169 587 185 600 210 610 247 618 283 627 333 633 387 637 443 640 540 639 597 635 647 630 680 623 700 615 711z" fill="none" stroke="#dba677" />
    <path d="M548 171L560 185 572 212 582 240 588 270 595 303 600 347 606 393 609 437 612 467 613 507 613 567 610 620 606 667 600 697 587 713" fill="none" stroke="#e0b088" />

    <path d="M823 398l397-30v54l-396 28z" fill="url(#shaft-green)" />
    <path d="M748 170L777 170 787 193 797 230 807 277 815 330 822 387 825 433 827 490 828 540 827 590 820 647 810 687 802 697 773 700z" fill="url(#rim-green)" />
    <path d="M723 170L715 190 710 220 707 260 707 303 708 360 712 440 718 507 727 563 737 617 747 657 760 688 773 700 788 680 796 640 800 587 802 523 800 473 798 437 794 393 790 347 783 300 777 263 767 220 758 190 748 170z" fill="#545d50" />
    <path d="M783 401l13-1 3 53-14 1z" fill="#35462f" />
    <path d="M795 400l28-2 3 52-27 3z" fill="#607e57" />
    <ellipse cx="783" cy="427" rx="7" ry="26" fill="#4b5547" stroke="#2f392c" strokeWidth=".8" />
    <path d="M748 177L742 200 735 253 733 310 734 367 738 440 747 520 758 583 767 643 783 677 802 697" fill="none" stroke="#2b3528" strokeWidth=".8" />
    {greenBores.map(([x, y]) => (
      <Bore key={`${x}-${y}`} x={x} y={y} tone="green" />
    ))}
    <path d="M788 606l22-1q5 14 3 29l-26 2z" fill="#33432f" />
    <path d="M758 616l29-1v19l-28 2z" fill="url(#pin)" />
    <ellipse cx="819" cy="486" rx="3" ry="18" fill="#6f9086" stroke="#48646b" />
    <path d="M773 700L760 688 747 657 737 617 727 563 718 507 712 440 708 360 707 260 710 220 715 190 723 170M777 170L787 193 797 230 807 277 815 330 822 387 825 433 828 540 827 590 820 647 810 687 802 697 773 700" fill="none" stroke="#8fb585" />
    <path d="M748 170L758 190 767 220 777 263 783 300 790 347 794 393 798 437 800 473 802 523 800 587 796 640 788 680 773 700" fill="none" stroke="#a6c49c" />
    <path d="M767 489h14l3 2 2-4 2 4 2-4 2 3 2-4 2 3 3-4" fill="none" stroke="#a6aaa4" strokeWidth=".9" />
    <path d="M766 391h11M771.500 386v11" stroke="#fff" />

    <circle cx="616.500" cy="519" r="36.500" fill="#ffe63c" opacity=".45" />
    <path d="M610 500l32-2 2-1 1 2 14-2" fill="none" stroke="#6f6842" />
    <path d="M584.500 471.500h17l3.500 9-3 10h-17.500z" fill="none" stroke="#000" />
    <path d="M616 519v17l4-4 4 7 3-2-4-6h5z" fill="#fff" stroke="#111" strokeWidth=".9" />
    <path d="M630.500 533.500h12l3 4v11h-11l-4-4z" fill="#fff" stroke="#000" />
    <path d="M630.500 533.500h12l3 4h-11zM634.500 537.500v11" fill="#000" stroke="#000" />

    <path d="M466.500 718.500h362v9h-362z" fill="#fff" stroke="#000" />
    <path d="M466 718h91v10h-91zM647 718h91v10h-91z" fill="#000" />
    <text x="455" y="714">0.00</text>
    <text x="631" y="714">100.00</text>
    <text x="812" y="714">200.00 (mm)</text>
    <text x="543" y="744">50.00</text>
    <text x="721" y="744">150.00</text>

    <path d="M1137 685l47-2.500" stroke="#c22115" strokeWidth="4" />
    <path d="M1183 675l16 6-15 8z" fill="#d32a1a" />
    <path d="M1136.500 686v46" stroke="#11651b" strokeWidth="4" />
    <path d="M1131 731h13l-6.500 15z" fill="#0b5413" />
    <path d="M1128 673l8 11" stroke="#0b1098" strokeWidth="4" />
    <circle cx="1127.500" cy="673" r="6.500" fill="#0c10a8" />
    <circle cx="1161" cy="704" r="6.500" fill="url(#ball)" />
    <text x="1123" y="666" fill="#14148c">Z</text>
    <text x="1208" y="680" fill="#b02418">X</text>
    <text x="1137" y="757" fill="#14701c">Y</text>
  </svg>
);

const MiniTriad = ({ x, y }) => (
  <g transform={`translate(${x} ${y})`}>
    <path d="M0 0l20-1" stroke="#a3231a" strokeWidth="1.500" />
    <path d="M19-4l8 3-8 3z" fill="#c22115" />
    <path d="M-.5 1v20" stroke="#11651b" strokeWidth="1.500" />
    <path d="M-4 20h6l-2 7z" fill="#0b5413" />
    <path d="M-4-2h5v5h-5z" fill="#14205c" />
    <circle cx="11.500" cy="13" r="2.800" fill="#128c98" />
    <text x="-3" y="3" fill="#14148c">Z</text>
    <text x="29" y="0" fill="#b02418">X</text>
    <text x="1" y="31" fill="#14701c">Y</text>
  </g>
);

const ReferenceScene = () => (
  <svg viewBox="1224 165 342 414" role="img" aria-label="Reference body">
    <defs>
      <Gradient id="ref-shaft" stops={["#7c5538", "#94673f", "#4b3423"]} />
      <Gradient id="ref-disc" stops={["#94653f", "#8c6040", "#5f422c", "#38291d"]} />
    </defs>
    <path d="M1393 302h8l3 24 2 46 1 38-2 32h-8z" fill="#e4eae5" />
    <path d="M1396 309h4v12h-4zM1397 323h7v8h-7zM1400 405h6v9h-6zM1400 424h5v12h-5zM1401 363h4v4h-4z" fill="#c6cfc9" />
    <path d="M1405 364l121-3v13l-119 5z" fill="#e3e7e4" />
    <path d="M1526 363h10v9h-10z" fill="#dfe4e1" />
    <path d="M1255 372h8v-3l18-1 108-3v14l-108 3h-18v-2l-8-1z" fill="url(#ref-shaft)" />
    <path d="M1386 302h7l3 18 3 50 1 30-1 41h-8l-3-36-2-30-2-40 1-24z" fill="url(#ref-disc)" />
    <path d="M1386 318l2 20 3 20-1 5-5-8-1-30z" fill="#443122" />
    <path d="M1386 311v8M1385 331v7M1388 414v6M1391 430v8" stroke="#d9c7b4" strokeWidth="1.200" />
    <circle cx="1394" cy="368" r="3.500" fill="#a2542d" opacity=".7" />
    <path d="M1348 540h94v9h-94z" fill="#000" />
    <text x="1338" y="537">0.00</text>
    <text x="1425" y="561">200.00</text>
    <MiniTriad x={1522} y={538} />
  </svg>
);

const MobileScene = () => (
  <svg viewBox="1224 605 342 414" role="img" aria-label="Mobile body">
    <defs>
      <Gradient id="mob-shaft" stops={["#4c6145", "#6a805f", "#39462f"]} />
    </defs>
    <path d="M1315 811l6-1 71-1v8l-71 1-6-1z" fill="#ebe7e3" />
    <path d="M1390 772h7v78h-5l-2-20z" fill="#dcd8d3" />
    <path d="M1402 808l70-2 4 1v6l-4 1-70 2z" fill="url(#mob-shaft)" />
    <path d="M1394 772h5l2 18 1 20v30l-1 12h-4l-2-20-2-30z" fill="#5b6f51" />
    <path d="M1396 778l1 20 2 30-1 22-3-20-2-30z" fill="#333c2c" />
    <path d="M1401 808v4" stroke="#3a6a90" />
    <path d="M1342 980h107v9h-107z" fill="#000" />
    <text x="1331" y="977">0.00</text>
    <text x="1432" y="1001">400.00</text>
    <MiniTriad x={1522} y={978} />
  </svg>
);

/* ---------- annotations table ---------- */

const AnnotationPanel = styled.section`
  flex: 251 1 0;
  display: flex;
  flex-direction: column;
  margin-top: 3px;
  background: #9f9f9f;
`;

const AnnotationTable = styled.table`
  width: 100%;
  table-layout: fixed;
  border-collapse: collapse;
  background: #f0f0f0;
  color: #111;
`;

const HeadCell = styled.th`
  width: ${(props) => (props.$width ? `${props.$width}px` : "auto")};
  height: 19px;
  padding: 0 4px;
  border-right: ${(props) => (props.$width ? "1px solid #6e6e6e" : "0")};
  border-bottom: 1px solid #6e6e6e;
  font-size: 13px;
  font-weight: 400;
  text-align: left;
`;

const columns = [
  ["Type", 100],
  ["Value", 100],
  ["Note", 150],
  ["Unit", 50],
  ["Location X", 100],
  ["Location Y", 100],
  ["Location Z", 100],
  ["Node ID", 100],
  ["Association"],
];

/* ---------- status bar, taskbar ---------- */

const StatusBar = styled.footer`
  display: flex;
  align-items: center;
  justify-content: flex-end;
  gap: 16px;
  height: 21px;
  padding: 1px 4px 0 0;
  background: #0173cf;
  color: #d6f2ff;
  font: 13px/18px "Open Sans", sans-serif;
`;

const StatusItem = styled.span`
  display: flex;
  align-items: center;
  gap: 5px;
`;

const TaskBar = styled.div`
  display: flex;
  height: 40px;
  background: linear-gradient(90deg, #20363f, #1e3140 55%, #1a2943);
`;

const TaskApps = styled.div`
  flex: 1;
  display: flex;
  margin-left: -10px;
`;

const TaskButton = styled.button`
  display: flex;
  align-items: center;
  justify-content: center;
  width: 49px;
  background:
    linear-gradient(#7ab4e0, #7ab4e0) no-repeat center bottom / ${(props) => (props.$active ? 48 : props.$open ? 40 : 0)}px 2px,
    linear-gradient(#4a5c68, #4a5c68) no-repeat center / ${(props) => (props.$active ? 48 : 0)}px 100%;
`;

const TrayScroll = styled.div`
  display: flex;
  flex-direction: column;
  justify-content: space-between;
  width: 16px;
  background: #f0f0f1;
`;

const Clock = styled.button`
  width: 74px;
  color: #eef2f5;
  line-height: 19px;
  text-align: center;
`;

const Glyph = ({ children }) => (
  <svg width="24" height="24" viewBox="0 0 24 24" fill="none" overflow="visible" aria-hidden="true">
    {children}
  </svg>
);

const GlyphText = styled.text`
  font-family: "Open Sans", sans-serif;
  font-weight: ${(props) => props.$weight || 700};
  font-size: ${(props) => props.$size || 10}px;
  font-style: ${(props) => (props.$italic ? "italic" : "normal")};
  text-anchor: middle;
`;

const taskApps = [
  ["Computer", <Glyph><path d="M6 2l16 4v12L7 15z" fill="#8fd0f8" /><path d="M7 3.500l14 3.300V16L8 13.500z" fill="#4fa8ec" /><path d="M0 20l5-4 9 2-4 4zM14 18l4-1 2 2-4 1z" fill="#dcdfe3" /></Glyph>],
  ["Lock", <Glyph><path d="M7.500 11V7a4.500 4.500 0 0 1 9 0v4" stroke="#2ba3c4" strokeWidth="2.400" /><path d="M4 10h16v11H4z" fill="#1fa0c6" /><path d="M12 13v4" stroke="#0f4358" strokeWidth="2" /></Glyph>],
  ["Xmind", <Glyph><rect width="24" height="24" rx="2" fill="#e9f6ff" /><path d="M3 1.500h18L12 8zM22.500 3v18L16 12zM3 22.500h18L12 16zM1.500 3v18L8 12z" fill="#1b9cf0" /></Glyph>],
  ["Visio", <Glyph><path d="M11 4h11v16H11z" fill="#fff" stroke="#3955a3" /><path d="M15 7h4v3h-4zM13.500 13h4v3h-4zM17 10v3M19 8.500h2" stroke="#3955a3" /><path d="M1 4l12-2v20L1 20z" fill="#3955a3" /><GlyphText x="7" y="16" fill="#fff">V</GlyphText></Glyph>],
  ["Translate", <Glyph><path d="M1 3h11v17l-4 1-7-1z" fill="#c5401e" /><path d="M12 3h11v16l-11 2z" fill="#0d2750" /><GlyphText x="6.500" y="18" fill="#fff" $size={17}>Z</GlyphText><GlyphText x="17.500" y="18" fill="#fff" $size={16}>Y</GlyphText></Glyph>],
  ["Chrome", <Glyph><circle cx="12" cy="12" r="11" fill="#f6c33c" /><path d="M12 12L2.500 6.500A11 11 0 0 1 21.500 6.500H12z" fill="#dc4a38" /><path d="M12 12l-2 11A11 11 0 0 1 2.500 6.500z" fill="#3f9a52" /><circle cx="12" cy="12" r="5.200" fill="#fff" /><circle cx="12" cy="12" r="4.200" fill="#4a84ec" /></Glyph>],
  ["OA", <Glyph><rect x="1.500" y="2" width="21" height="20" rx="3" fill="#f03a14" /><path d="M5 7h4.500v10H5zM12.500 17.500V7H18M12.500 11h4v6.500M19 11v6" stroke="#ffd9cf" strokeWidth="1.400" /></Glyph>],
  ["Messenger", <Glyph><path d="M4 1h16a2 2 0 0 1 2 2v14a2 2 0 0 1-2 2h-3l-2 4-3-4H4a2 2 0 0 1-2-2V3a2 2 0 0 1 2-2z" fill="#0a84f0" /><path d="M12 4v12M6.500 7.500l11 5M17.500 7.500l-11 5" stroke="#fff" strokeWidth="2.400" /></Glyph>],
  ["Ansys", <Glyph><rect width="24" height="24" rx="3" fill="#f5bd22" /><path d="M0 24L8 0h4L7 24zM10 0h5l9 24h-7z" fill="#221e1a" /><path d="M6 24l5.500-17L17 24z" fill="#f5bd22" /></Glyph>],
  ["Studio", <Glyph><circle cx="15" cy="5" r="3" fill="#f09a80" /><path d="M0 21L7 8q2-2 4 0l5 9-1-5q3-2 5 1l4 8h-6l-2-2-2 2h-3L9 13l-4 8z" fill="#8350e4" /></Glyph>],
  ["Browser", <Glyph><circle cx="12" cy="12" r="11" fill="#fff" /><circle cx="12" cy="12" r="7.500" stroke="#52ae35" strokeWidth="4" /><path d="M7 12h15v3h-9z" fill="#52ae35" /><path d="M14 15h9v2.500h-8z" fill="#fff" /><path d="M2 20C9 21 19 11 21 3" stroke="#7fc642" strokeWidth="2" /></Glyph>, true],
  ["AutoCAD", <Glyph><path d="M0 0h24v24H0z" fill="#f2a9a2" /><path d="M0 0h24v8H0z" fill="#fae1de" /><path d="M12 3l8 16-8-3-8 3z" fill="#b9201c" /><path d="M12 3l3 12-3 1-3-1z" fill="#d93b30" /></Glyph>],
  ["Python", <Glyph><path d="M3 1h13l4 5v17H3z" fill="#eceff1" /><path d="M6 6h9M6 9h9M6 12h6M6 15h5M6 18h5" stroke="#c2c8cc" /><path d="M3 1v22" stroke="#90979c" strokeWidth="2" strokeDasharray="1 2" /><path d="M12 12q0-4 4-4t4 4v4h-8z" fill="#3a76a8" /><path d="M15 20q0-4 4-4h4q0 6-4 6t-4-2z" fill="#f3c63f" /></Glyph>],
  ["WD", <Glyph><path d="M0 2h24v20H0z" fill="#0c569c" /><GlyphText x="12" y="16" fill="#fff" $size={12} $italic $weight={800}>WD</GlyphText></Glyph>],
  ["Workbench", <Glyph><path d="M0 0h24v24H0z" fill="#000" /><path d="M12 1l3.500 2v3.500L12 8.500 8.500 6.500V3zM8.500 6.500L12 8.500v4L8.500 15 5 12.500v-4zM15.500 6.500L19 8.500v4L15.500 15 12 12.500v-4z" stroke="#d9922a" strokeWidth="1.200" /><GlyphText x="12" y="23" fill="#fff" $size={9}>WB</GlyphText></Glyph>, true],
  ["Mechanical", <Glyph><path d="M0 0h24v24H0z" fill="#000" /><circle cx="9" cy="11" r="3.500" stroke="#e09a2c" strokeWidth="1.600" /><circle cx="9" cy="11" r="5" stroke="#e09a2c" strokeWidth="1.600" strokeDasharray="2 2" /><circle cx="16.500" cy="4.500" r="2.200" stroke="#e09a2c" strokeWidth="1.400" /><circle cx="16.500" cy="4.500" r="3.500" stroke="#e09a2c" strokeDasharray="1.500 1.500" /><GlyphText x="12" y="23" fill="#fff" $size={9}>M</GlyphText></Glyph>, true, true],
  ["Recorder", <Glyph><circle cx="12" cy="12" r="10" fill="#111" stroke="#fff" strokeWidth="1.800" /><circle cx="12" cy="12" r="6" fill="#fb3b2c" /></Glyph>, true],
];

/* ---------- input method bar ---------- */

const InputBar = styled.div`
  position: fixed;
  right: 245px;
  bottom: 77px;
  display: flex;
  align-items: center;
  height: 27px;
  border: 1px solid #b5cdea;
  border-radius: 2px;
  background: #fff;
  color: #1b6cc4;
`;

const InputLogo = styled.div`
  margin: 0 3px 0 -16px;
`;

const InputButton = styled.button`
  display: flex;
  justify-content: center;
  width: 24px;
  font: 700 15px/20px "Noto Sans CJK SC", sans-serif;
`;

const InputMethodBar = () => (
  <InputBar>
    <InputLogo>
      <svg width="32" height="32" viewBox="0 0 32 32" fill="none" aria-hidden="true">
        <rect x="3" y="2" width="27" height="27" rx="5" transform="rotate(-10 16 16)" fill="#f4631e" />
        <path d="M24 8C17 5 9 7 9 11c0 6 14 2 14 8 0 4-8 5-15 3" stroke="#fff" strokeWidth="4.500" />
      </svg>
    </InputLogo>
    <InputButton>英</InputButton>
    <InputButton aria-label="Punctuation">
      <Icon>
        <circle cx="4" cy="5" r="2" fill="#1b6cc4" />
        <circle cx="11.500" cy="9.500" r="2.200" fill="#1b6cc4" />
        <path d="M13.700 9.500q0 4-3 5l-.5-1q1.500-1 1.500-3z" fill="#1b6cc4" />
      </Icon>
    </InputButton>
    <InputButton aria-label="Voice input">
      <Icon>
        <rect x="5" width="6" height="10" rx="3" fill="#1b6cc4" />
        <path d="M2.500 7a5.500 5.500 0 0 0 11 0M8 12.500V16" stroke="#1b6cc4" strokeWidth="1.800" />
      </Icon>
    </InputButton>
    <InputButton aria-label="Keyboard">
      <Icon>
        <rect x="1" y="2.500" width="14" height="11" rx="1" stroke="#1b6cc4" strokeWidth="2" />
        <path d="M3.500 6h9M3.500 8.500h9" stroke="#1b6cc4" strokeWidth="1.500" strokeDasharray="1.500 1" />
        <path d="M5 11h6" stroke="#1b6cc4" strokeWidth="1.300" />
      </Icon>
    </InputButton>
    <InputButton aria-label="Skin">
      <svg width="20" height="20" viewBox="0 0 20 20">
        <path d="M1 6l5-3q3 3 6 0l5 3-2 4-2-1v9H5V9l-2 1z" fill="#8e86f2" />
        <path d="M1 6l5-3 1 1-2 5-2 1zM17 6l-5-3-1 1 2 5 2 1z" fill="#ec8290" />
        <circle cx="17" cy="3" r="3" fill="#f4683c" />
      </svg>
    </InputButton>
    <InputButton aria-label="Toolbox">
      <Icon>
        <path d="M2 2h5v5H2zM2 9h5v5H2zM9 9h5v5H9z" fill="#1b6cc4" stroke="#1b6cc4" strokeLinejoin="round" />
        <circle cx="11.500" cy="4.500" r="2.300" stroke="#1b6cc4" strokeWidth="2" />
      </Icon>
    </InputButton>
  </InputBar>
);

const App = () => (
  <Window>
    <GlobalStyle />
    <AppFrame>
      <TitleBar>
        <Title>B : Static Structural - Mechanical [Ansys Mechanical Enterprise]</Title>
        <WindowButton aria-label="Minimize">
          <Icon>
            <path d="M3.500 9h9" stroke="#1e1e1e" strokeWidth="2" />
          </Icon>
        </WindowButton>
        <WindowButton aria-label="Restore">
          <Icon>
            <path d="M3.500 7.500h6v5h-6zM6 7V4h6.500v5.500H10" stroke="#1e1e1e" strokeWidth="1.300" />
            <path d="M3 7.500h7M6 4h7" stroke="#1e1e1e" strokeWidth="1.800" />
          </Icon>
        </WindowButton>
        <WindowButton aria-label="Close">
          <Icon>
            <path d="M3.500 3.500l9 9M12.500 3.500l-9 9" stroke="#1e1e1e" strokeWidth="2" />
          </Icon>
        </WindowButton>
      </TitleBar>
      <TabRow>
        <Tab>Automation</Tab>
        <Tab>Add-ons</Tab>
        <TabSpacer />
        <QuickLaunch placeholder="Quick Launch" aria-label="Quick Launch" />
        <TinyButton aria-label="Collapse ribbon">
          <svg width="12" height="8" viewBox="0 0 12 8" fill="none">
            <path d="M1 7l5-5 5 5" stroke="#d29a2e" strokeWidth="2" />
          </svg>
        </TinyButton>
        <TinyButton aria-label="Feedback">
          <CheckNote />
        </TinyButton>
        <TinyButton aria-label="Help">
          <svg width="16" height="16" viewBox="0 0 16 16">
            <circle cx="8" cy="8" r="7" fill="#5196e8" />
            <GlyphText x="8" y="12" fill="#fff" $size={11}>?</GlyphText>
          </svg>
          <Caret color="#333" />
        </TinyButton>
      </TabRow>
      <Ribbon />
      <Workspace>
        <LeftDock>
          <PanelHeader />
          <OutlineArea>
            <ScrollBar before={186} size={254} after={1} />
          </OutlineArea>
          <PanelHeader />
          <DetailsArea>
            <DetailRows>
              {detailTones.map((tone, i) => (
                <DetailRow key={i} $tone={tone} />
              ))}
            </DetailRows>
            <ScrollBar before={0} size={100} after={172} />
          </DetailsArea>
        </LeftDock>
        <Center>
          <GraphicsToolbar />
          <Viewport $grow={595}>
            <MainScene />
            <Legend>
              <strong>Longitudinal - zhuanzi1-1 To zhuanzi2-1</strong>
              <span>2024/10/12 0:15</span>
              <LegendKey>Longitudinal - zhuanzi1-1 To zhuanzi2-1</LegendKey>
            </Legend>
          </Viewport>
          <AnnotationPanel>
            <PanelHeader title="Graphics Annotations" />
            <AnnotationTable>
              <thead>
                <tr>
                  {columns.map(([label, width]) => (
                    <HeadCell key={label} $width={width}>
                      {label}
                    </HeadCell>
                  ))}
                </tr>
              </thead>
            </AnnotationTable>
          </AnnotationPanel>
        </Center>
        <RightDock>
          <DockSection>
            <PanelHeader title="Reference Body View" />
            <Viewport>
              <ReferenceScene />
            </Viewport>
          </DockSection>
          <DockSection>
            <PanelHeader title="Mobile Body View" />
            <Viewport>
              <MobileScene />
            </Viewport>
          </DockSection>
        </RightDock>
      </Workspace>
      <StatusBar>
        <StatusItem>Messages pane</StatusItem>
        <StatusItem>No Selection</StatusItem>
        <StatusItem>
          <svg width="13" height="5" viewBox="0 0 13 5">
            <path d="M8.500 0L13 5H4z" fill="#fff" />
          </svg>
          Metric (mm, kg, N, s, mV, mA)
        </StatusItem>
        <StatusItem>Degrees</StatusItem>
        <StatusItem>RPM</StatusItem>
        <StatusItem>Celsius</StatusItem>
      </StatusBar>
    </AppFrame>
    <TaskBar>
      <TaskApps>
        {taskApps.map(([name, glyph, open, active]) => (
          <TaskButton key={name} aria-label={name} $open={open} $active={active}>
            {glyph}
          </TaskButton>
        ))}
      </TaskApps>
      <TrayScroll>
        <ScrollArrow aria-label="Previous tray icons">
          <Chevron up />
        </ScrollArrow>
        <ScrollArrow aria-label="Next tray icons">
          <Chevron />
        </ScrollArrow>
      </TrayScroll>
      <Clock>
        0:15
        <br />
        2024/10/12
      </Clock>
    </TaskBar>
    <InputMethodBar />
  </Window>
);

export default App;
